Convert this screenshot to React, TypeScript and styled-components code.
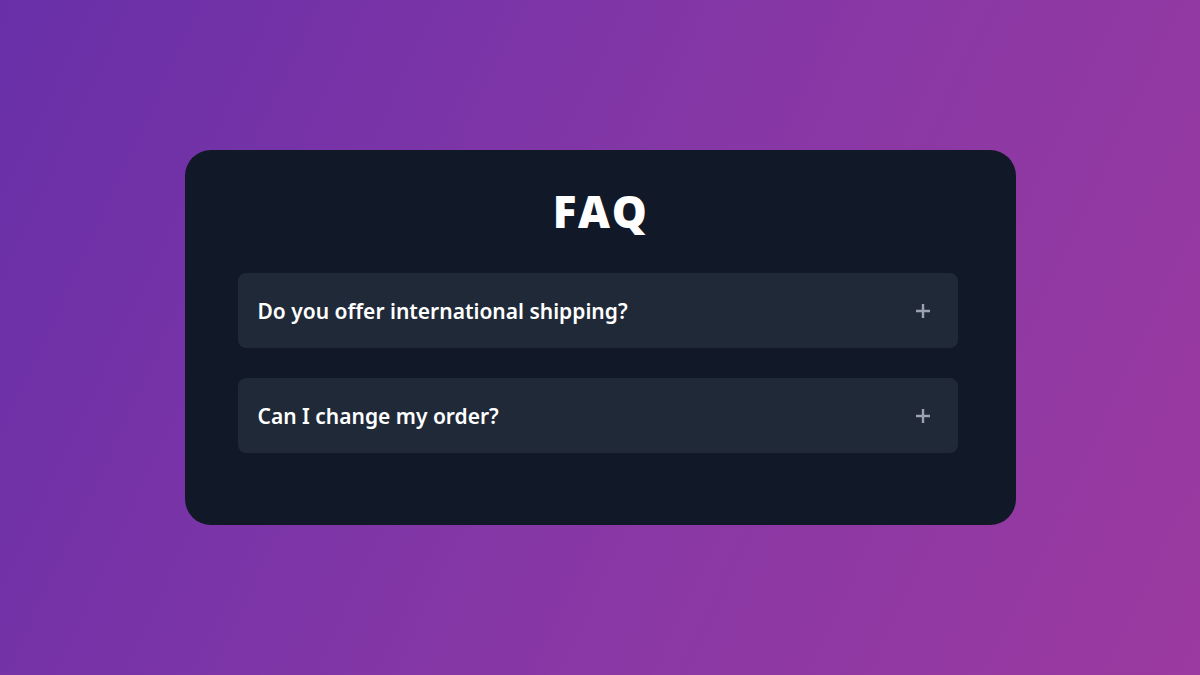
import React from "react";
import styled, { createGlobalStyle } from "styled-components";

const Global = createGlobalStyle`
  html, body { margin: 0; padding: 0; }
  body {
    width: 1200px;
    height: 675px;
    overflow: hidden;
    font-family: "Noto Sans", "Open Sans", sans-serif;
    background: linear-gradient(115deg, #682fa8 0%, #8537a6 50%, #9b3aa0 100%);
  }
`;

const Page = styled.main`
  width: 1200px;
  height: 675px;
  display: flex;
  align-items: center;
  justify-content: center;
`;

const Card = styled.section`
  box-sizing: border-box;
  width: 831px;
  height: 375px;
  margin-top: -1px;
  background: #111827;
  border-radius: 26px;
  padding: 32px 58px 0 53px;
  display: flex;
  flex-direction: column;
  align-items: flex-start;
`;

const Title = styled.h1`
  align-self: stretch;
  margin: 0 0 33px;
  padding-left: 7px;
  text-align: center;
  color: #ffffff;
  font-family: "Noto Sans", sans-serif;
  font-weight: 900;
  font-size: 44px;
  line-height: 58px;
  letter-spacing: 2.5px;
`;

const List = styled.div`
  width: 720px;
  display: flex;
  flex-direction: column;
  gap: 30px;
`;

const Item = styled.button`
  box-sizing: border-box;
  width: 100%;
  height: 75px;
  border: 0;
  border-radius: 8px;
  background: #1f2937;
  padding: 1px 27px 0 20px;
  display: flex;
  align-items: center;
  justify-content: space-between;
  cursor: pointer;
  text-align: left;
`;

const Question = styled.span`
  color: #ffffff;
  font-family: "Noto Sans", sans-serif;
  font-weight: 600;
  font-size: 21px;
  letter-spacing: 0;
`;

const PlusIcon = () => (
  <svg width="16" height="16" viewBox="0 0 16 16">
    <path d="M8 1v14M1 8h14" stroke="#9ca3af" strokeWidth="2.4" />
  </svg>
);

const questions = ["Do you offer international shipping?", "Can I change my order?"];

export default function App() {
  return (
    <>
      <Global />
      <Page>
        <Card>
          <Title>FAQ</Title>
          <List>
            {questions.map((q) => (
              <Item key={q}>
                <Question>{q}</Question>
                <PlusIcon />
              </Item>
            ))}
          </List>
        </Card>
      </Page>
    </>
  );
}
